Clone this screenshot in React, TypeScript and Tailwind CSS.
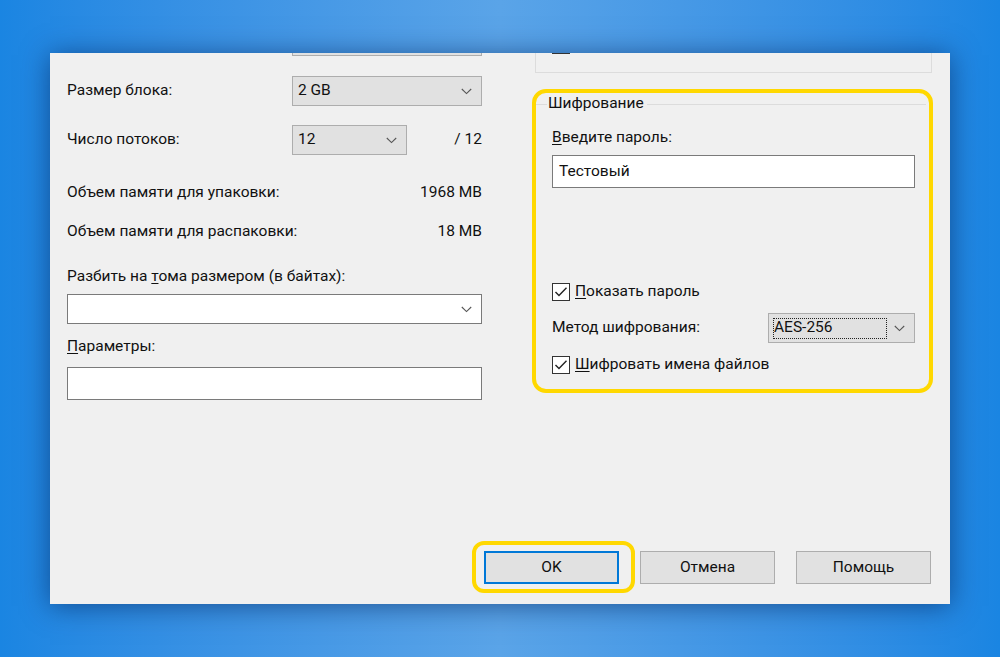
import React from "react";

const font = { fontFamily: "Roboto, 'Noto Sans', sans-serif" };

const Chevron = () => (
  <svg width="11" height="7" viewBox="0 0 11 7" className="shrink-0">
    <polyline points="0.8,1 5.5,5.6 10.2,1" fill="none" stroke="#555" strokeWidth="1.1" />
  </svg>
);

const Check = () => (
  <div className="w-[18px] h-[18px] shrink-0 border border-[#333] bg-white flex items-center justify-center">
    <svg width="14" height="12" viewBox="0 0 14 12">
      <polyline points="1.5,6 5,9.6 12.5,1.8" fill="none" stroke="#222" strokeWidth="1.4" />
    </svg>
  </div>
);

const Select = ({ value, className }: { value: string; className: string }) => (
  <div
    className={`h-[30px] bg-[#e1e1e1] border border-[#adadad] flex items-center justify-between pl-[5px] pr-[9px] ${className}`}
  >
    <span>{value}</span>
    <Chevron />
  </div>
);

const Btn = ({ label, primary }: { label: string; primary?: boolean }) => (
  <div
    className={`w-[135px] h-[33px] bg-[#e1e1e1] flex items-center justify-center ${
      primary ? "border-2 border-[#0078d7]" : "border border-[#adadad]"
    }`}
  >
    {label}
  </div>
);

export default function App() {
  return (
    <div
      className="w-full h-[657px] overflow-hidden bg-linear-to-r from-[#1a85e2] via-[#5aa4e8] to-[#1a85e2] pt-[53px] px-[50px]"
      style={font}
    >
      <div className="h-[551px] bg-[#f0f0f0] overflow-hidden flex flex-col text-[15.5px] text-[#111] shadow-[0_2px_26px_rgba(0,35,90,0.6)]">
        <div className="flex pl-[17px] pr-[18px]">
          {/* left column */}
          <div className="w-[415px] flex flex-col">
            <div className="ml-[225px] w-[190px] h-[30px] -mt-[27px] bg-[#e1e1e1] border border-[#adadad]" />

            <div className="mt-[20px] flex items-center">
              <span className="w-[225px]">Размер блока:</span>
              <Select value="2 GB" className="w-[190px]" />
            </div>

            <div className="mt-[19px] flex items-center">
              <span className="w-[225px]">Число потоков:</span>
              <Select value="12" className="w-[115px]" />
              <span className="ml-auto">/ 12</span>
            </div>

            <div className="mt-[26px] h-[24px] flex items-center justify-between">
              <span>Объем памяти для упаковки:</span>
              <span>1968 MB</span>
            </div>

            <div className="mt-[15px] h-[24px] flex items-center justify-between">
              <span>Объем памяти для распаковки:</span>
              <span>18 MB</span>
            </div>

            <div className="mt-[21px] h-[24px] flex items-center">
              <span>
                Разбить на <u className="underline-offset-2">т</u>ома размером (в байтах):
              </span>
            </div>

            <div className="mt-[5px] h-[30px] bg-white border border-[#7a7a7a] flex items-center justify-end pr-[9px]">
              <Chevron />
            </div>

            <div className="mt-[11px] h-[24px] flex items-center">
              <span>
                <u className="underline-offset-2">П</u>араметры:
              </span>
            </div>

            <div className="mt-[8px] h-[33px] bg-white border border-[#7a7a7a]" />
          </div>

          {/* right column */}
          <div className="w-[397px] ml-[53px] flex flex-col">
            <div className="h-[60px] -mt-[40px] border border-[#dcdcdc] pl-[16px] pt-[22px]">
              <div className="w-[18px] h-[18px] border border-[#333] bg-white" />
            </div>

            <div className="mt-[16px] -ml-[3px] -mr-[1px] h-[304px] border-4 border-[#ffd800] rounded-[14px] flex flex-col">
              <div className="h-[22px] flex items-center">
                <div className="w-[11px] h-px bg-[#dcdcdc]" />
                <span className="pl-[1px] pr-[3px]">Шифрование</span>
                <div className="flex-1 h-px bg-[#dcdcdc] mr-[3px]" />
              </div>

              <div className="pl-[16px] pr-[14px] flex flex-col">
                <div className="mt-[11px] h-[24px] flex items-center">
                  <span>
                    <u className="underline-offset-2">В</u>ведите пароль:
                  </span>
                </div>

                <div className="mt-[5px] h-[33px] bg-white border border-[#7a7a7a] flex items-center pl-[6px]">
                  Тестовый
                </div>

                <div className="mt-[92px] h-[24px] flex items-center">
                  <Check />
                  <span className="ml-[5px]">
                    <u className="underline-offset-2">П</u>оказать пароль
                  </span>
                </div>

                <div className="mt-[9px] flex items-center justify-between">
                  <span>Метод шифрования:</span>
                  <div className="w-[147px] h-[30px] bg-[#e1e1e1] border border-[#adadad] flex items-center pl-[4px] pr-[9px]">
                    <span className="w-[114px] h-[21px] border border-dotted border-[#222] flex items-center">
                      AES-256
                    </span>
                    <span className="ml-auto">
                      <Chevron />
                    </span>
                  </div>
                </div>

                <div className="mt-[10px] h-[24px] flex items-center">
                  <Check />
                  <span className="ml-[5px]">
                    <u className="underline-offset-2">Ш</u>ифровать имена файлов
                  </span>
                </div>
              </div>
            </div>
          </div>
        </div>

        {/* buttons */}
        <div className="mt-auto pb-[20px] pr-[19px] flex justify-end gap-[21px]">
          <div className="relative">
            <Btn label="OK" primary />
            <div className="absolute -left-[12px] -right-[16px] -top-[10px] -bottom-[9px] border-4 border-[#ffd800] rounded-[12px]" />
          </div>
          <Btn label="Отмена" />
          <Btn label="Помощь" />
        </div>
      </div>
    </div>
  );
}
